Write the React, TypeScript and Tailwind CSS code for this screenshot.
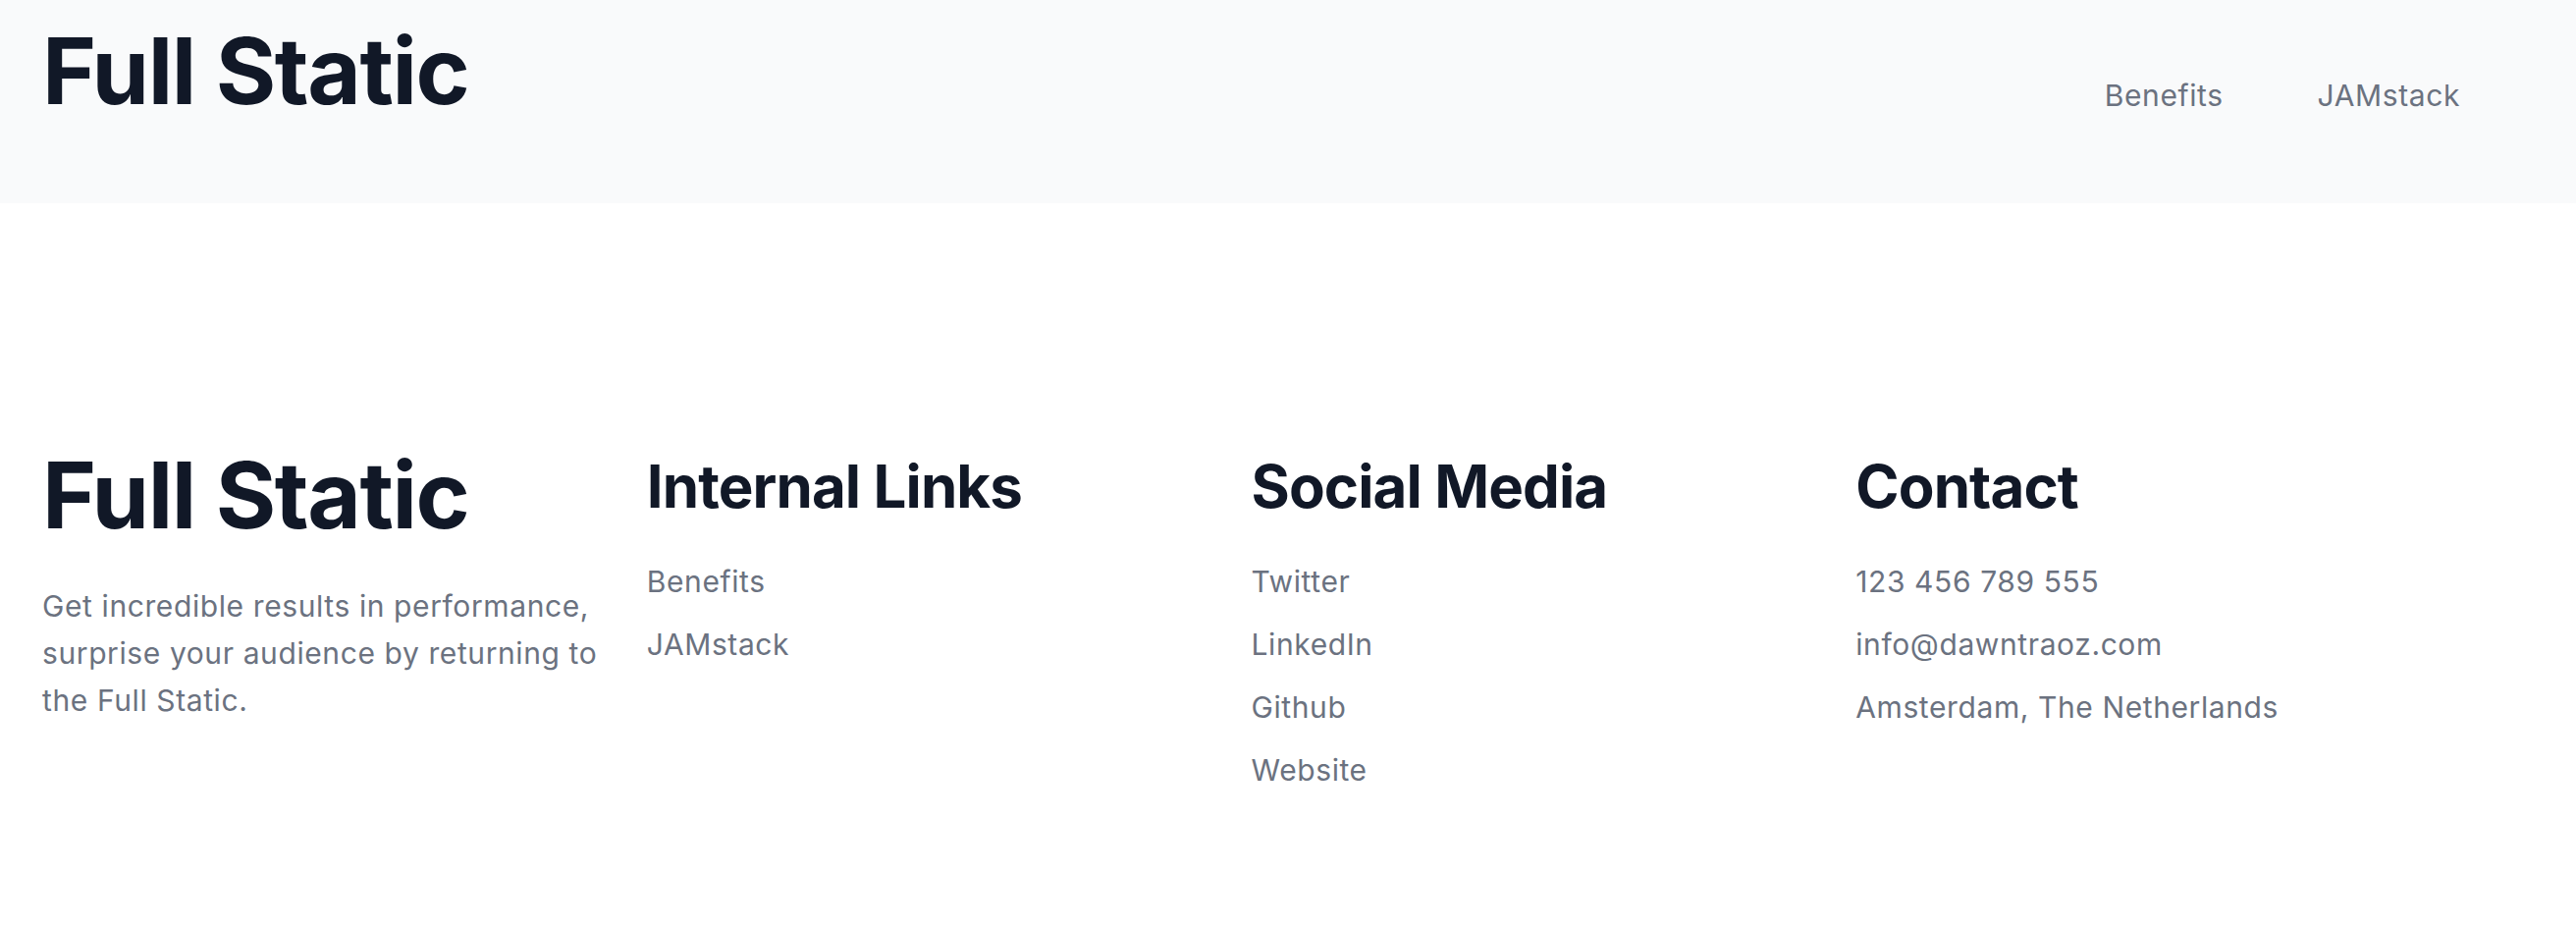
const internalLinks = ["Benefits", "JAMstack"];
const socialLinks = ["Twitter", "LinkedIn", "Github", "Website"];
const contactItems = ["123 456 789 555", "info@dawntraoz.com", "Amsterdam, The Netherlands"];

const heading = "font-['Inter','Liberation_Sans',sans-serif] font-bold text-[#111827] tracking-[-0.015em]";
const body = "font-['Inter','Liberation_Sans',sans-serif] text-[30px] leading-[48px] tracking-[0.02em] text-[#6b7280]";

function LinkList({ items }: { items: string[] }) {
  return (
    <ul className="mt-[43px] flex flex-col gap-4">
      {items.map((item) => (
        <li key={item}>
          <a href="#" className={body}>
            {item}
          </a>
        </li>
      ))}
    </ul>
  );
}

function FooterColumn({ title, items }: { title: string; items: string[] }) {
  return (
    <div className="pt-2">
      <h3 className={`${heading} text-[60px] leading-none`}>{title}</h3>
      <LinkList items={items} />
    </div>
  );
}

export default function App() {
  return (
    <div className="min-h-screen bg-white">
      {/* Header */}
      <header className="h-[207px] bg-[#f9fafb] pt-[25px]">
        <div className="ml-[43px] flex w-[2463px] items-start justify-between">
          <h1 className={`${heading} text-[94px] leading-none`}>Full Static</h1>
          <nav className="mt-[48px] flex gap-[96px]">
            {internalLinks.map((link) => (
              <a key={link} href="#" className={body}>
                {link}
              </a>
            ))}
          </nav>
        </div>
      </header>

      {/* Footer */}
      <footer className="pt-[250px] pb-[100px]">
        <div className="ml-[43px] grid w-[2463px] grid-cols-4 items-start">
          <div>
            <h2 className={`${heading} text-[94px] leading-none`}>Full Static</h2>
            <p className={`${body} mt-[42px] pr-2`}>
              Get incredible results in performance, surprise your audience by returning to the Full Static.
            </p>
          </div>
          <FooterColumn title="Internal Links" items={internalLinks} />
          <FooterColumn title="Social Media" items={socialLinks} />
          <FooterColumn title="Contact" items={contactItems} />
        </div>
      </footer>
    </div>
  );
}
